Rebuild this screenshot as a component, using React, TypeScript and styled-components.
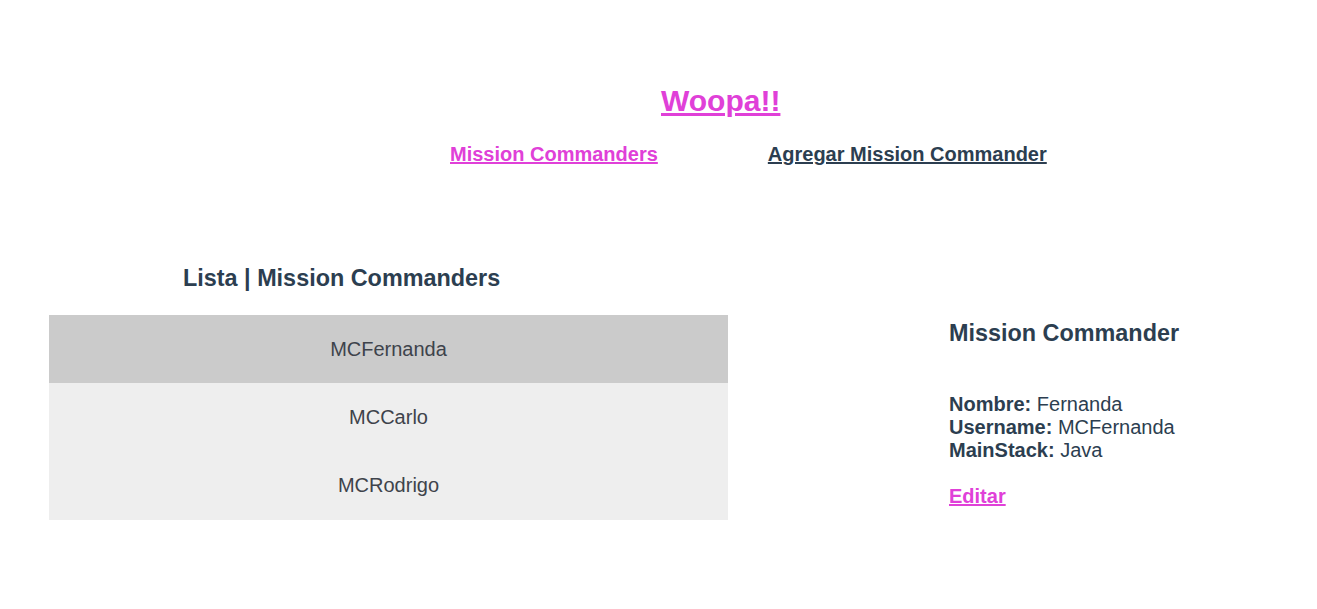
import React from "react";
import styled, { createGlobalStyle } from "styled-components";

const Global = createGlobalStyle`
  html, body { margin: 0; padding: 0; background: #ffffff; }
  body { font-family: "Liberation Sans", Arial, Helvetica, sans-serif; }
`;

const PINK = "#e040d8";
const INK = "#2c3e50";

const Page = styled.div`
  font-family: "Liberation Sans", Arial, Helvetica, sans-serif;
  color: ${INK};
  font-size: 20px;
  width: 1317px;
  padding-top: 84px;
`;

const Header = styled.header`
  display: flex;
  flex-direction: column;
`;

const Title = styled.a`
  align-self: flex-start;
  margin-left: 661px;
  font-size: 30px;
  font-weight: bold;
  line-height: 34.5px;
  color: ${PINK};
  text-decoration: underline;
`;

const Nav = styled.nav`
  display: flex;
  gap: 110px;
  padding-left: 450px;
  margin-top: 24px;
`;

const NavLink = styled.a<{ $active?: boolean }>`
  font-size: 20px;
  font-weight: bold;
  line-height: 23px;
  color: ${(p) => (p.$active ? PINK : INK)};
  text-decoration: underline;
`;

const Main = styled.main`
  display: flex;
  align-items: flex-start;
  margin-top: 97px;
`;

const ListColumn = styled.section`
  display: flex;
  flex-direction: column;
  width: 679px;
  margin-left: 49px;
`;

const Heading = styled.h3`
  margin: 0;
  font-size: 23.4px;
  line-height: 27px;
  font-weight: bold;
  color: ${INK};
`;

const ListHeading = styled(Heading)`
  margin-left: 134px;
  margin-top: 2px;
`;

const List = styled.ul`
  list-style: none;
  margin: 23.5px 0 0;
  padding: 0;
`;

const Item = styled.li<{ $selected?: boolean }>`
  height: 68.2px;
  display: flex;
  align-items: center;
  justify-content: center;
  font-size: 20px;
  color: #3e434b;
  background: ${(p) => (p.$selected ? "#cbcbcb" : "#eeeeee")};
`;

const Detail = styled.section`
  margin-left: 221px;
  margin-top: 57px;
  display: flex;
  flex-direction: column;
`;

const Fields = styled.div`
  margin-top: 46px;
  display: flex;
  flex-direction: column;
`;

const Field = styled.div`
  font-size: 20px;
  line-height: 23px;
  color: ${INK};
  b { font-weight: bold; }
`;

const Edit = styled.a`
  align-self: flex-start;
  margin-top: 23px;
  font-size: 20px;
  line-height: 23px;
  font-weight: bold;
  color: ${PINK};
  text-decoration: underline;
`;

const commanders = ["MCFernanda", "MCCarlo", "MCRodrigo"];

export default function App() {
  return (
    <>
      <Global />
      <Page>
        <Header>
          <Title href="#">Woopa!!</Title>
          <Nav>
            <NavLink href="#" $active>Mission Commanders</NavLink>
            <NavLink href="#">Agregar Mission Commander</NavLink>
          </Nav>
        </Header>
        <Main>
          <ListColumn>
            <ListHeading>Lista | Mission Commanders</ListHeading>
            <List>
              {commanders.map((c, i) => (
                <Item key={c} $selected={i === 0}>{c}</Item>
              ))}
            </List>
          </ListColumn>
          <Detail>
            <Heading>Mission Commander</Heading>
            <Fields>
              <Field><b>Nombre:</b> Fernanda</Field>
              <Field><b>Username:</b> MCFernanda</Field>
              <Field><b>MainStack:</b> Java</Field>
            </Fields>
            <Edit href="#">Editar</Edit>
          </Detail>
        </Main>
      </Page>
    </>
  );
}
